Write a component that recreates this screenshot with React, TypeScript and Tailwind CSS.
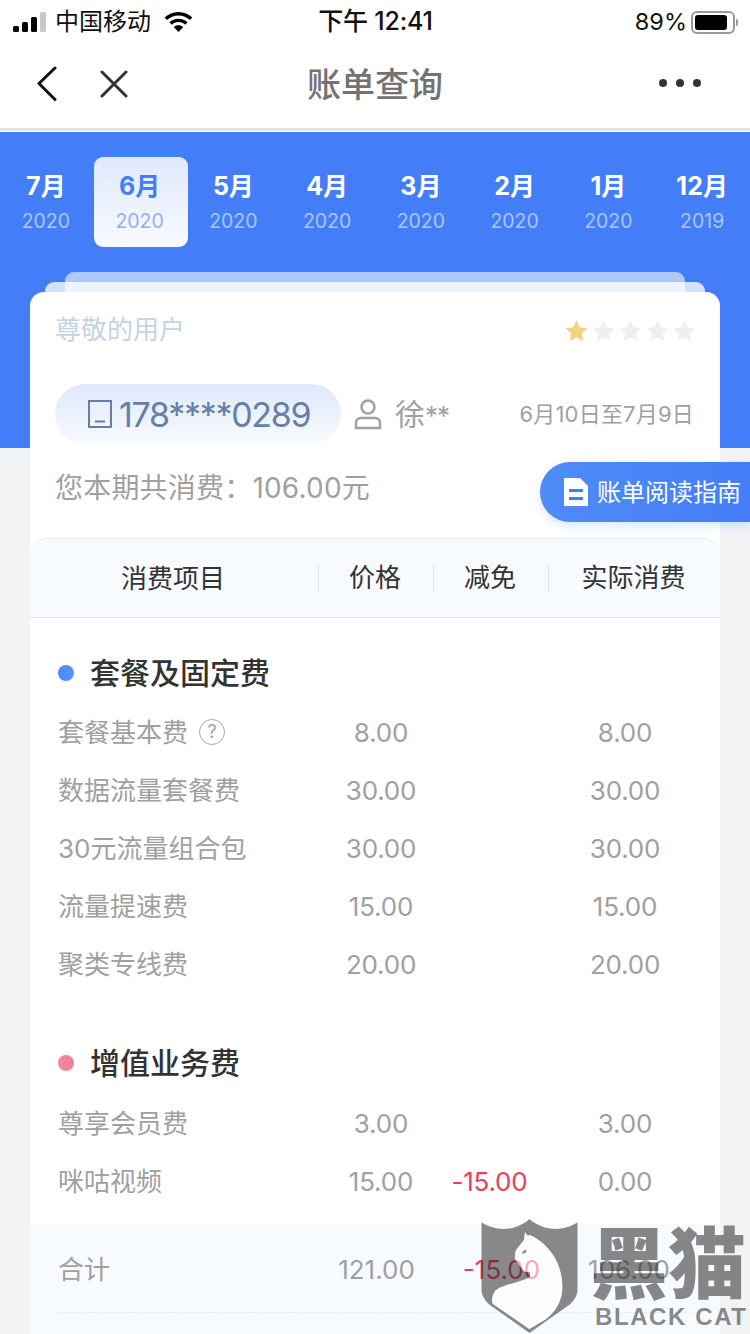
const FONT = "font-['Inter','Noto_Sans_CJK_SC',sans-serif]";

const months = [
  ["7月", "2020"], ["6月", "2020"], ["5月", "2020"], ["4月", "2020"],
  ["3月", "2020"], ["2月", "2020"], ["1月", "2020"], ["12月", "2019"],
];

function Star({ color }: { color: string }) {
  return (
    <svg width="23" height="22" viewBox="0 0 24 23" fill={color}>
      <path d="M12 0.5l3.4 7.2 7.9 1-5.8 5.4 1.5 7.9-7-3.9-7 3.9 1.5-7.9L0.7 8.7l7.9-1z" />
    </svg>
  );
}

function Row({ name, a, b, c, q }: { name: string; a: string; b?: string; c: string; q?: boolean }) {
  return (
    <div className="grid h-[58px] grid-cols-[267px_112px_105px_166px] items-center pl-[28px] text-[26px] text-[#a0a0a0]">
      <div className="flex items-center gap-[11px]">
        <span>{name}</span>
        {q && (
          <span className="flex h-[26px] w-[26px] items-center justify-center rounded-full border border-[#a8a8a8] text-[18px] leading-none">?</span>
        )}
      </div>
      <div className="text-center tracking-[-0.2px]">{a}</div>
      <div className="text-center tracking-[-0.2px] text-[#e8405a]">{b}</div>
      <div className="text-center tracking-[-0.2px]">{c}</div>
    </div>
  );
}

function Section({ color, title }: { color: string; title: string }) {
  return (
    <div className="flex h-[40px] items-center pl-[28px]">
      <span className={`h-[16px] w-[16px] rounded-full ${color}`} />
      <span className="ml-[16px] text-[30px] font-medium text-[#333]">{title}</span>
    </div>
  );
}

const CAT =
  "M44 13.300L46.700 16.700L49 16C60 21 69 30 74 39.300C79 48 81.300 58 81.300 68C81.300 78 78 85 74 91C70 96 66 100 60.700 102.700L48.300 110L12 85C10.500 83 10.500 78 14 72C17 69 20 68 24 66.700C29 65 33 64 37.300 62.700C42 61 46 60 49 57.700L49 53.300L44 52.700C41 50 39 48 37 44C34 41 33.500 39 34 37.700C34 35 34.500 33 35 31L43 21Z";
const SHIELD =
  "M0.500 3.300C8 8 15 10 22 10C32 10 42 6 48.500 0C55 6 65 10 75 10C82 10 89 8 96.500 3.300V71C96.500 76 93 82 88 86L48.500 114L9 86C4 82 0.500 76 0.500 71Z";

function Watermark() {
  return (
    <div className="pointer-events-none absolute left-[481px] top-[1219px] flex h-[115px] w-[269px]">
      <svg width="97" height="115" viewBox="0 0 97 115" className="shrink-0">
        <path fill="#272727" fillOpacity="0.54" fillRule="evenodd" d={`${SHIELD}${CAT}`} />
        <path fill="#fff" fillOpacity="0.55" d={CAT} />
        <path fill="#272727" fillOpacity="0.54" d="M41 33L44.500 30.500L45.500 33L42 35Z" />
      </svg>
      <div className="ml-[12px] flex w-[160px] flex-col items-start">
        <div className="mt-[6px] h-[79px] whitespace-nowrap text-[78px] font-black leading-[79px] text-[#272727]/55">黑猫</div>
        <div className="ml-[5px] whitespace-nowrap font-['Liberation_Sans',sans-serif] text-[24px] font-bold leading-[26px] tracking-[1.6px] text-[#272727]/55">BLACK CAT</div>
      </div>
    </div>
  );
}

export default function App() {
  return (
    <div className={`relative h-[1334px] w-[750px] overflow-hidden bg-[#f2f3f5] ${FONT}`}>
      {/* status bar */}
      <div className="flex h-[44px] items-center justify-between bg-white pl-[13px] pr-[12px] text-[24px] text-[#111]">
        <div className="flex w-[250px] items-center">
          <svg width="34" height="20" viewBox="0 0 34 20" fill="#000">
            <rect x="0" y="14" width="6" height="6" rx="1.500" />
            <rect x="9" y="10" width="6" height="10" rx="1.500" />
            <rect x="18" y="5" width="6" height="15" rx="1.500" />
            <rect x="27" y="0" width="6" height="20" rx="1.500" fill="#c8c8c8" />
          </svg>
          <span className="ml-[8px]">中国移动</span>
          <svg width="29" height="21" viewBox="0 0 30 22" className="ml-[13px]" fill="#000">
            <path d="M15 0C9.400 0 4.300 2.200.500 5.800L3 8.400C6.100 5.400 10.300 3.600 15 3.600s8.900 1.800 12 4.800l2.500-2.600C25.700 2.200 20.600 0 15 0z" />
            <path d="M15 7c-3.700 0-7 1.400-9.500 3.800L8 13.400c1.800-1.700 4.300-2.800 7-2.800s5.200 1.100 7 2.800l2.500-2.600C22 8.400 18.700 7 15 7z" />
            <path d="M15 14c-1.900 0-3.600.7-4.900 1.900L15 21l4.900-5.100C18.600 14.700 16.900 14 15 14z" />
          </svg>
        </div>
        <span className="text-[25px] font-medium tracking-[-0.2px]">下午 12:41</span>
        <div className="flex w-[250px] items-center justify-end">
          <span className="mr-[4px] text-[23.5px]">89%</span>
          <div className="flex h-[23px] w-[44px] items-center rounded-[6px] border-2 border-[#999] p-[2px]">
            <div className="h-full w-[90%] rounded-[3px] bg-black" />
          </div>
          <div className="ml-[1px] h-[7px] w-[2px] rounded-r bg-[#999]" />
        </div>
      </div>

      {/* nav */}
      <div className="relative flex h-[84px] items-center justify-center bg-white">
        <div className="absolute left-[36px] top-[22px] flex items-center gap-[42px]">
          <svg width="22" height="36" viewBox="0 0 22 36" fill="none" stroke="#111" strokeWidth="3" strokeLinecap="round" strokeLinejoin="round">
            <path d="M19 2L3 17.500l16 16" />
          </svg>
          <svg width="28" height="28" viewBox="0 0 28 28" fill="none" stroke="#333" strokeWidth="3" strokeLinecap="round">
            <path d="M2 2l24 24M26 2L2 26" />
          </svg>
        </div>
        <span className="mb-[3px] text-[34px] font-medium text-[#737373]">账单查询</span>
        <div className="absolute right-[49px] top-[35px] flex gap-[9px]">
          <span className="h-[8px] w-[8px] rounded-full bg-[#333]" />
          <span className="h-[8px] w-[8px] rounded-full bg-[#333]" />
          <span className="h-[8px] w-[8px] rounded-full bg-[#333]" />
        </div>
      </div>
      <div className="h-[4px] border-t-[3px] border-[#e2e2e2] bg-white" />

      {/* blue band */}
      <div className="h-[316px] bg-[#437ef8] pt-[25px]">
        <div className="grid grid-cols-8">
          {months.map(([m, y], i) => (
            <div
              key={m + y}
              className={`flex h-[90px] flex-col items-center rounded-[9px] pr-[2px] pt-[11px] ${i === 1 ? "bg-gradient-to-b from-[#dfe9fc] to-[#f8faff] text-[#437ef8]" : "text-white"}`}
            >
              <span className="text-[25px] font-bold leading-[36px]">{m}</span>
              <span className={`mt-[2px] text-[19.5px] leading-[30px] ${i === 1 ? "text-[#8fb2f5]" : "text-[#aac6fb]"}`}>{y}</span>
            </div>
          ))}
        </div>
      </div>

      {/* card stack */}
      <div className="relative -mt-[176px]">
        <div className="mx-[65px] h-[10px] rounded-t-[9px] bg-[#aec8f9]" />
        <div className="mx-[45px] h-[10px] rounded-t-[9px] bg-[#d3e3fd] px-[20px]">
          <div className="h-full bg-[#eef4fe]" />
        </div>
        <div className="mx-[30px] rounded-t-[14px] bg-white">
          <div className="flex h-[77px] items-start justify-between pl-[25px] pr-[24px] pt-[20px]">
            <span className="text-[26px] leading-[36px] text-[#c3d4e4]">尊敬的用户</span>
            <div className="mt-[8px] flex gap-[4px]">
              <Star color="#f2d27c" />
              <Star color="#efefef" />
              <Star color="#efefef" />
              <Star color="#efefef" />
              <Star color="#efefef" />
            </div>
          </div>
          <div className="mt-[15px] flex h-[60px] items-center pl-[25px] pr-[26px]">
            <div className="flex h-[60px] w-[286px] items-center rounded-full bg-gradient-to-b from-[#dfe9fb] to-[#f8faff] pl-[33px]">
              <svg width="24" height="28" viewBox="0 0 24 28" fill="none" stroke="#6580a8" strokeWidth="2">
                <rect x="1" y="1" width="22" height="26" />
                <path d="M7 21.500h10" />
              </svg>
              <span className="ml-[7px] text-[34px] tracking-[-1.3px] text-[#6580a8]">178****0289</span>
            </div>
            <svg width="28" height="32" viewBox="0 0 28 32" fill="none" stroke="#a0a0a0" strokeWidth="2.500" className="ml-[13px]">
              <circle cx="14" cy="9" r="6.500" />
              <path d="M2 30v-5c0-3 2-5 5-5h14c3 0 5 2 5 5v5z" />
            </svg>
            <span className="ml-[13px] mt-[1px] text-[30px] text-[#a0a0a0]">徐<span className="text-[26px] tracking-[-1px]">**</span></span>
            <span className="ml-auto text-[22px] tracking-[0.2px] text-[#a0a0a0]">6月10日至7月9日</span>
          </div>
          <div className="flex h-[88px] items-center pl-[25px] text-[28px] tracking-[0.2px] text-[#a0a0a0]">您本期共消费：106.00元</div>
          <div className="flex h-[6px]" />

          {/* table header */}
          <div className="grid h-[80px] grid-cols-[288px_115px_115px_172px] items-center rounded-t-[18px] border-y border-[#e4e8ef] bg-[#f7fafe] text-center text-[26px] text-[#333]">
            <div className="pr-[2px]">消费项目</div>
            <div className="border-l border-[#e2e6ec] pr-[2px] leading-[30px]">价格</div>
            <div className="border-l border-[#e2e6ec] pr-[2px] leading-[30px]">减免</div>
            <div className="border-l border-[#e2e6ec] pr-[2px] leading-[30px]">实际消费</div>
          </div>

          <div className="pt-[35px]">
            <Section color="bg-gradient-to-r from-[#4a8bf8] to-[#5b93f5]" title="套餐及固定费" />
            <div className="mt-[10px]">
              <Row name="套餐基本费" a="8.00" c="8.00" q />
              <Row name="数据流量套餐费" a="30.00" c="30.00" />
              <Row name="30元流量组合包" a="30.00" c="30.00" />
              <Row name="流量提速费" a="15.00" c="15.00" />
              <Row name="聚类专线费" a="20.00" c="20.00" />
            </div>
            <div className="mt-[50px]">
              <Section color="bg-gradient-to-r from-[#f08a9c] to-[#ec8393]" title="增值业务费" />
            </div>
            <div className="mt-[11px]">
              <Row name="尊享会员费" a="3.00" c="3.00" />
              <Row name="咪咕视频" a="15.00" b="-15.00" c="0.00" />
            </div>
          </div>

          {/* total */}
          <div className="mt-[14px] h-[120px] bg-[#f7fafe] pt-[11px]">
            <div className="mx-[28px] grid h-[78px] grid-cols-[256px_125px_125px_130px] items-center border-b border-dashed border-[#e8ecf1] pb-[8px] text-[26px] text-[#a0a0a0]">
              <div>合计</div>
              <div className="text-center">121.00</div>
              <div className="text-center text-[#e8405a]">-15.00</div>
              <div className="text-center">106.00</div>
            </div>
          </div>
        </div>
      </div>

      {/* floating guide button */}
      <div className="absolute left-[540px] top-[462px] flex h-[60px] w-[210px] items-center rounded-l-full bg-gradient-to-r from-[#4f8cf6] to-[#437ef8] pl-[24px] shadow-[0_4px_10px_rgba(67,126,248,0.2)]">
        <svg width="24" height="28" viewBox="0 0 24 28">
          <path fill="#fff" d="M0 1a1 1 0 011-1h15l8 8v20H0z" />
          <rect x="5" y="11" width="14" height="3" fill="#437ef8" />
          <rect x="5" y="19" width="14" height="3" fill="#437ef8" />
        </svg>
        <span className="ml-[9px] mt-[1px] text-[24px] text-white">账单阅读指南</span>
      </div>

      <Watermark />
    </div>
  );
}
